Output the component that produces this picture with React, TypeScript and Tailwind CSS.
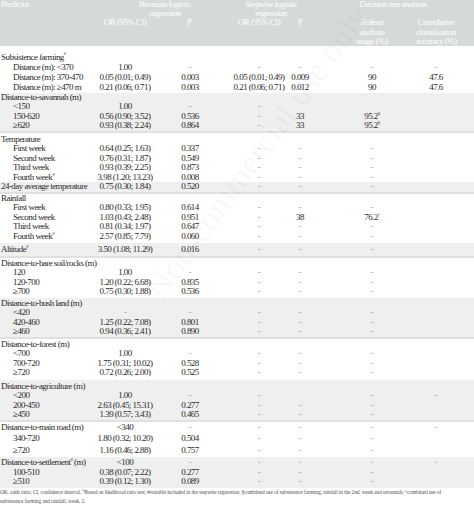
import React from 'react';

type Row = {
  label: React.ReactNode;
  indent?: boolean;
  cells?: string[];
};

type Band = {
  gray?: boolean;
  line?: boolean;
  pad: string;
  rowH: string;
  rows: Row[];
};

const COLS = 'grid grid-cols-[100px_50px_80px_58px_24px_120px_8px_34px]';

const Sup = ({ children }: { children: React.ReactNode }) => (
  <sup className="relative top-[-1px] align-top text-[5px] leading-none">{children}</sup>
);

const D = '-';

const BANDS: Band[] = [
  {
    pad: 'pt-[6px] pb-[1px]',
    rowH: 'h-[10px] leading-[10px]',
    rows: [
      { label: <>Subsistence farming<Sup>#</Sup></> },
      { indent: true, label: 'Distance (m): <370', cells: ['1.00', D, D, D, D, D] },
      { indent: true, label: 'Distance (m): 370-470', cells: ['0.05 (0.01; 0.49)', '0.003', '0.05 (0.01; 0.49)', '0.009', '90', '47.6'] },
      { indent: true, label: 'Distance (m): ≥470 m', cells: ['0.21 (0.06; 0.71)', '0.003', '0.21 (0.06; 0.71)', '0.012', '90', '47.6'] },
    ],
  },
  {
    gray: true,
    line: true,
    pad: 'pt-0 pb-0',
    rowH: 'h-[9.5px] leading-[9.5px]',
    rows: [
      { label: 'Distance-to-savannah (m)' },
      { indent: true, label: '<150', cells: ['1.00', D, D, '', '', ''] },
      { indent: true, label: '150-620', cells: ['0.56 (0.90; 3.52)', '0.536', D, '33', '95.2§', ''] },
      { indent: true, label: '≥620', cells: ['0.93 (0.38; 2.24)', '0.864', D, '33', '95.2§', ''] },
    ],
  },
  {
    pad: 'pt-[2px] pb-0',
    rowH: 'h-[9.5px] leading-[9.5px]',
    rows: [
      { label: 'Temperature' },
      { indent: true, label: 'First week', cells: ['0.64 (0.25; 1.63)', '0.337', D, D, D, ''] },
      { indent: true, label: 'Second week', cells: ['0.76 (0.31; 1.87)', '0.549', D, D, D, ''] },
      { indent: true, label: 'Third week', cells: ['0.93 (0.39; 2.25)', '0.873', D, D, D, ''] },
      { indent: true, label: <>Fourth week<Sup>#</Sup></>, cells: ['3.98 (1.20; 13.23)', '0.008', D, D, D, ''] },
    ],
  },
  {
    gray: true,
    line: true,
    pad: 'pt-0 pb-0',
    rowH: 'h-[9.5px] leading-[9.5px]',
    rows: [{ label: '24-day average temperature', cells: ['0.75 (0.30; 1.84)', '0.520', D, D, D, ''] }],
  },
  {
    pad: 'pt-0 pb-[1.5px]',
    rowH: 'h-[9.5px] leading-[9.5px]',
    rows: [
      { label: 'Rainfall' },
      { indent: true, label: 'First week', cells: ['0.80 (0.33; 1.95)', '0.614', D, D, D, ''] },
      { indent: true, label: 'Second week', cells: ['1.03 (0.43; 2.48)', '0.951', D, '38', '76.2^', ''] },
      { indent: true, label: 'Third week', cells: ['0.81 (0.34; 1.97)', '0.647', D, D, D, ''] },
      { indent: true, label: <>Fourth week<Sup>#</Sup></>, cells: ['2.57 (0.85; 7.79)', '0.060', D, D, D, ''] },
    ],
  },
  {
    gray: true,
    line: true,
    pad: 'pt-[2.5px] pb-[1px]',
    rowH: 'h-[9.5px] leading-[9.5px]',
    rows: [{ label: <>Altitude<Sup>#</Sup></>, cells: ['3.50 (1.08; 11.29)', '0.016', D, D, D, ''] }],
  },
  {
    pad: 'pt-[1px] pb-[1px]',
    rowH: 'h-[9.5px] leading-[9.5px]',
    rows: [
      { label: 'Distance-to-bare soil/rocks (m)' },
      { indent: true, label: '120', cells: ['1.00', D, D, D, D, ''] },
      { indent: true, label: '120-700', cells: ['1.20 (0.22; 6.68)', '0.835', D, D, D, ''] },
      { indent: true, label: '≥700', cells: ['0.75 (0.30; 1.88)', '0.536', D, D, D, ''] },
    ],
  },
  {
    gray: true,
    line: true,
    pad: 'pt-[1px] pb-0',
    rowH: 'h-[9.5px] leading-[9.5px]',
    rows: [
      { label: 'Distance-to-bush land (m)' },
      { indent: true, label: '<420', cells: [D, D, D, D, D, ''] },
      { indent: true, label: '420-460', cells: ['1.25 (0.22; 7.08)', '0.801', D, D, D, ''] },
      { indent: true, label: '≥460', cells: ['0.94 (0.36; 2.41)', '0.890', D, D, D, ''] },
    ],
  },
  {
    pad: 'pt-[1px] pb-[2px]',
    rowH: 'h-[9.5px] leading-[9.5px]',
    rows: [
      { label: 'Distance-to-forest (m)' },
      { indent: true, label: '<700', cells: ['1.00', D, D, D, D, ''] },
      { indent: true, label: '700-720', cells: ['1.75 (0.31; 10.02)', '0.528', D, D, D, ''] },
      { indent: true, label: '≥720', cells: ['0.72 (0.26; 2.00)', '0.525', D, D, D, ''] },
    ],
  },
  {
    gray: true,
    line: true,
    pad: 'pt-[2px] pb-0',
    rowH: 'h-[9.5px] leading-[9.5px]',
    rows: [
      { label: 'Distance-to-agriculture (m)' },
      { indent: true, label: '<200', cells: ['1.00', D, D, '', D, D] },
      { indent: true, label: '200-450', cells: ['2.63 (0.45; 15.31)', '0.277', D, D, D, ''] },
      { indent: true, label: '≥450', cells: ['1.39 (0.57; 3.43)', '0.465', D, D, D, ''] },
    ],
  },
  {
    pad: 'pt-0 pb-[0.5px]',
    rowH: 'h-[11.5px] leading-[11.5px]',
    rows: [
      { label: 'Distance-to-main road (m)', cells: ['<340', D, D, D, D, D] },
      { indent: true, label: '340-720', cells: ['1.80 (0.32; 10.20)', '0.504', D, D, D, ''] },
      { indent: true, label: '≥720', cells: ['1.16 (0.46; 2.88)', '0.757', D, D, D, ''] },
    ],
  },
  {
    gray: true,
    pad: 'pt-[1.5px] pb-[1px]',
    rowH: 'h-[9.5px] leading-[9.5px]',
    rows: [
      { label: <>Distance-to-settlement<Sup>#</Sup> (m)</>, cells: ['<100', D, D, D, D, D] },
      { indent: true, label: '100-510', cells: ['0.38 (0.07; 2.22)', '0.277', D, D, D, ''] },
      { indent: true, label: '≥510', cells: ['0.39 (0.12; 1.30)', '0.089', D, D, D, ''] },
    ],
  },
];

const Value = ({ v }: { v: string }) => {
  if (v === D) return <span className="text-[#a0a0a0]">-</span>;
  const m = v.match(/^(.*?)([§^])$/);
  if (m) return <span>{m[1]}<Sup>{m[2]}</Sup></span>;
  return <span>{v}</span>;
};

const TableRow = ({ row, rowH }: { row: Row; rowH: string }) => {
  const cells = row.cells ?? ['', '', '', '', '', ''];
  return (
    <div className={`${COLS} ${rowH} items-center`}>
      <div className={`whitespace-nowrap ${row.indent ? 'pl-[13px]' : 'pl-px'}`}>{row.label}</div>
      {cells.map((c, i) => (
        <div key={i} className="flex justify-center whitespace-nowrap">
          {c && <Value v={c} />}
        </div>
      ))}
      <div />
    </div>
  );
};

const Header = () => (
  <div className={`${COLS} grid-rows-[18.4px_27.6px] bg-[#d4d9da] text-white leading-[9.2px]`}>
    <div className="pl-px">Predictor</div>
    <div className="col-span-2 text-center">
      Bivariate logistic
      <br />
      regression
    </div>
    <div className="col-span-2 text-center">
      Stepwise logistic
      <br />
      regression
    </div>
    <div className="col-span-3 text-center">Decision tree analysis</div>

    <div />
    <div className="flex justify-center whitespace-nowrap">OR (95% CI)</div>
    <div className="flex justify-center">
      <span>
        P<Sup>°</Sup>
      </span>
    </div>
    <div className="flex justify-center whitespace-nowrap">OR (95% CI)</div>
    <div className="flex justify-center">P</div>
    <div className="flex flex-col items-center">
      <span>Ruleset</span>
      <span>attribute</span>
      <span>usage (%)</span>
    </div>
    <div className="flex flex-col items-center whitespace-nowrap">
      <span>Cumulative</span>
      <span>classification</span>
      <span>accuracy (%)</span>
    </div>
    <div />
  </div>
);

export default function App() {
  return (
    <div className="relative h-[505px] w-[474px] overflow-hidden bg-white font-['Liberation_Serif','Times_New_Roman',serif] text-[9px] tracking-[-0.55px] text-[#2a2a2a]">
      <Header />
      {BANDS.map((band, i) => (
        <div
          key={i}
          className={`${band.pad} ${band.gray ? 'bg-[#efefef]' : 'bg-white'} ${band.line ? 'border-b-2 border-[#e0e0e0]' : ''}`}
        >
          {band.rows.map((row, j) => (
            <TableRow key={j} row={row} rowH={band.rowH} />
          ))}
        </div>
      ))}
      <div className="whitespace-nowrap text-[5.5px] leading-[9px] tracking-[-0.15px] text-[#555]">
        <div>
          OR, odds ratio; CI, confidence interval. °Based on likelihood ratio test; #variable included in the stepwise
          regression; §combined use of subsistence farming, rainfall in the 2nd. week and savannah; ^combined use of
        </div>
        <div>subsistence farming and rainfall, week. 2.</div>
      </div>

      <div className="pointer-events-none absolute left-[257px] top-[152px] -translate-x-1/2 -translate-y-1/2 rotate-[-54deg] whitespace-nowrap text-[34px] tracking-normal text-black/[0.04]">
        Non-commercial use only
      </div>
    </div>
  );
}
